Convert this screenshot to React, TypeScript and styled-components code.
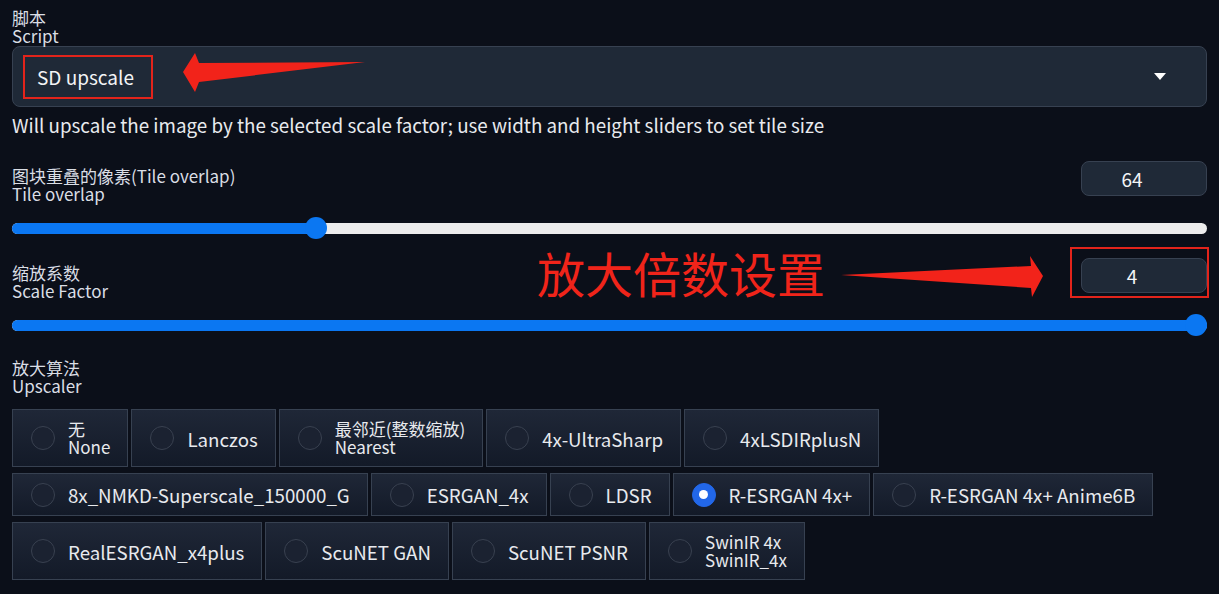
import styled, { createGlobalStyle } from "styled-components";

const GlobalStyle = createGlobalStyle`
  html, body {
    margin: 0;
    background: #0b0f19;
  }
  body {
    font-family: "Noto Sans CJK SC", "Noto Sans", sans-serif;
    color: #e5e7eb;
  }
`;

type Option = { label: string; sub?: string; checked?: boolean };

const rows: Option[][] = [
  [
    { label: "无", sub: "None" },
    { label: "Lanczos" },
    { label: "最邻近(整数缩放)", sub: "Nearest" },
    { label: "4x-UltraSharp" },
    { label: "4xLSDIRplusN" },
  ],
  [
    { label: "8x_NMKD-Superscale_150000_G" },
    { label: "ESRGAN_4x" },
    { label: "LDSR" },
    { label: "R-ESRGAN 4x+", checked: true },
    { label: "R-ESRGAN 4x+ Anime6B" },
  ],
  [
    { label: "RealESRGAN_x4plus" },
    { label: "ScuNET GAN" },
    { label: "ScuNET PSNR" },
    { label: "SwinIR 4x", sub: "SwinIR_4x" },
  ],
];

const SliderField: React.FC<{
  zh: string;
  en: string;
  value: number;
  ratio: number;
  marked?: boolean;
}> = (props) => {
  return (
    <Field>
      <SliderHeader>
        <HeaderLabel>
          <span>{props.zh}</span>
          <span>{props.en}</span>
        </HeaderLabel>
        <NumberBox $marked={props.marked}>{props.value}</NumberBox>
      </SliderHeader>
      <SliderWrap>
        <Track>
          <Fill style={{ width: `${props.ratio * 100}%` }} />
          <Thumb style={{ left: `calc(${props.ratio} * (100% - 22px))` }} />
        </Track>
      </SliderWrap>
    </Field>
  );
};

const App: React.FC = () => {
  return (
    <Page>
      <GlobalStyle />
      <FieldLabel>
        <span>脚本</span>
        <span>Script</span>
      </FieldLabel>
      <Dropdown>
        <SelectedValue $marked>SD upscale</SelectedValue>
        <svg width="12" height="7" viewBox="0 0 12 7">
          <polygon points="0,0 12,0 6,7" fill="#ffffff" />
        </svg>
      </Dropdown>
      <Description>
        Will upscale the image by the selected scale factor; use width and
        height sliders to set tile size
      </Description>

      <SliderField
        zh="图块重叠的像素(Tile overlap)"
        en="Tile overlap"
        value={64}
        ratio={0.25}
      />
      <SliderField zh="缩放系数" en="Scale Factor" value={4} ratio={1} marked />

      <UpscalerLabel>
        <span>放大算法</span>
        <span>Upscaler</span>
      </UpscalerLabel>
      <RadioGroup>
        {rows.map((row, i) => (
          <RadioRow key={i}>
            {row.map((opt) => (
              <RadioOption key={opt.label}>
                <RadioDot $checked={opt.checked} />
                {opt.sub ? (
                  <TwoLine>
                    <span>{opt.label}</span>
                    <span>{opt.sub}</span>
                  </TwoLine>
                ) : (
                  <OneLine>{opt.label}</OneLine>
                )}
              </RadioOption>
            ))}
          </RadioRow>
        ))}
      </RadioGroup>

      <Note>放大倍数设置</Note>
      <Arrows width="1219" height="594" viewBox="0 0 1219 594">
        <polygon
          points="183,72 195,53 199,63 365,62 199,82 195,92"
          fill="#f2231a"
        />
        <polygon
          points="841,275 1031,266 1030,256 1043,276 1032,297 1031,288"
          fill="#f2231a"
        />
      </Arrows>
    </Page>
  );
};

export default App;

const Page = styled.div`
  position: relative;
  width: 1219px;
  height: 594px;
  box-sizing: border-box;
  padding: 9px 12px 0;
  overflow: hidden;
`;

const FieldLabel = styled.div`
  display: flex;
  flex-direction: column;
  font-size: 17px;
  line-height: 18px;
  color: #dadee5;
`;

const Dropdown = styled.div`
  margin-top: 1px;
  height: 61px;
  box-sizing: border-box;
  display: flex;
  align-items: center;
  justify-content: space-between;
  padding: 0 40px 0 10px;
  background: #1f2937;
  border: 1px solid #374151;
  border-radius: 8px;
`;

const SelectedValue = styled.span<{ $marked?: boolean }>`
  display: flex;
  align-items: center;
  width: 130px;
  height: 44px;
  box-sizing: border-box;
  padding-left: 12px;
  font-size: 19px;
  color: #f3f4f6;
  border: 2px solid ${(p) => (p.$marked ? "#e3241b" : "transparent")};
`;

const Description = styled.p`
  margin: 6px 0 0;
  font-size: 18.8px;
  line-height: 24px;
  color: #e8eaee;
`;

const Field = styled.div`
  margin-top: 24px;
  & + & {
    margin-top: 19px;
  }
`;

const SliderHeader = styled.div`
  display: flex;
  justify-content: space-between;
  align-items: flex-start;
  height: 35px;
`;

const HeaderLabel = styled(FieldLabel)`
  padding-top: 6px;
`;

const NumberBox = styled.div<{ $marked?: boolean }>`
  position: relative;
  width: 126px;
  height: 35px;
  box-sizing: border-box;
  display: flex;
  align-items: center;
  justify-content: center;
  padding-right: 24px;
  background: #1f2937;
  border: 1px solid #374151;
  border-radius: 8px;
  font-size: 19px;
  color: #f3f4f6;

  &::after {
    content: "";
    display: ${(p) => (p.$marked ? "block" : "none")};
    position: absolute;
    left: -12px;
    top: -12px;
    right: -3px;
    bottom: -6px;
    border: 2px solid #e3241b;
  }
`;

const SliderWrap = styled.div`
  margin-top: 21px;
  height: 22px;
  display: flex;
  align-items: center;
`;

const Track = styled.div`
  position: relative;
  flex: 1;
  height: 11px;
  border-radius: 6px;
  background: #ececec;
`;

const Fill = styled.div`
  position: absolute;
  left: 0;
  top: 0;
  bottom: 0;
  border-radius: 6px;
  background: #0b77f2;
`;

const Thumb = styled.div`
  position: absolute;
  top: -5.5px;
  width: 22px;
  height: 22px;
  border-radius: 50%;
  background: #0b77f2;
`;

const UpscalerLabel = styled(FieldLabel)`
  margin-top: 23px;
`;

const RadioGroup = styled.div`
  margin-top: 14px;
  display: flex;
  flex-direction: column;
  gap: 6px;
`;

const RadioRow = styled.div`
  display: flex;
  gap: 3px;
`;

const RadioOption = styled.label`
  display: flex;
  align-items: center;
  gap: 13px;
  min-height: 43px;
  box-sizing: border-box;
  padding: 0 17px 0 18px;
  background: linear-gradient(180deg, #1f2737 0%, #131a28 100%);
  border: 1px solid #374151;
`;

const RadioDot = styled.span<{ $checked?: boolean }>`
  position: relative;
  flex: none;
  width: 24px;
  height: 24px;
  box-sizing: border-box;
  border-radius: 50%;
  background: ${(p) => (p.$checked ? "#2267e8" : "#1b2231")};
  border: 1px solid ${(p) => (p.$checked ? "#2267e8" : "#394150")};

  &::after {
    content: "";
    display: ${(p) => (p.$checked ? "block" : "none")};
    position: absolute;
    left: 50%;
    top: 50%;
    width: 9px;
    height: 9px;
    margin: -4.5px 0 0 -4.5px;
    border-radius: 50%;
    background: #ffffff;
  }
`;

const OneLine = styled.span`
  font-size: 18.7px;
  line-height: 21px;
  color: #e8eaee;
`;

const TwoLine = styled.span`
  display: flex;
  flex-direction: column;
  font-size: 17px;
  line-height: 18px;
  padding: 10px 0;
  color: #e8eaee;
`;

const Note = styled.div`
  position: absolute;
  left: 537px;
  top: 248px;
  font-size: 48px;
  line-height: 48px;
  color: #f0241a;
`;

const Arrows = styled.svg`
  position: absolute;
  left: 0;
  top: 0;
  pointer-events: none;
`;
